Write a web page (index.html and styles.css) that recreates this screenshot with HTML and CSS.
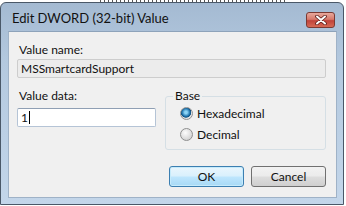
FILE: index.html
```html
<!DOCTYPE html>
<html lang="en">
  <head>
    <meta charset="UTF-8" />
    <title>Edit DWORD (32-bit) Value</title>
    <link rel="stylesheet" href="styles.css">
  </head>
  <body>
    <div class="backdrop"></div>
    <div class="window">
      <div class="titlebar">
        <span class="title">Edit DWORD (32-bit) Value</span>
        <span class="close">
          <svg width="12" height="10" viewBox="0 0 12 10">
            <path d="M2 1.5 L10 8.5 M10 1.5 L2 8.5" stroke="#5a1c18" stroke-width="3.6" stroke-linecap="round"/>
            <path d="M2 1.5 L10 8.5 M10 1.5 L2 8.5" stroke="#fff" stroke-width="2" stroke-linecap="round"/>
          </svg>
        </span>
      </div>
      <div class="client">
        <div class="field-label">Value name:</div>
        <div class="textbox readonly">MSSmartcardSupport</div>

        <div class="row">
          <div class="data-col">
            <div class="field-label">Value data:</div>
            <div class="textbox data">1<span class="caret"></span></div>
          </div>
          <fieldset class="base">
            <legend>Base</legend>
            <div class="radio-row">
              <span class="radio checked"></span>
              <span>Hexadecimal</span>
            </div>
            <div class="radio-row">
              <span class="radio"></span>
              <span>Decimal</span>
            </div>
          </fieldset>
        </div>

        <div class="buttons">
          <span class="btn default">OK</span>
          <span class="btn">Cancel</span>
        </div>
      </div>
    </div>
  </body>
</html>
```

FILE: styles.css
```css
/* --------------------
   Win7 style registry dialog
-------------------- */
body {
  margin: 0;
  width: 346px;
  height: 206px;
  overflow: hidden;
  background-color: #fff;
  font-family: Lato, "Noto Sans", "Liberation Sans", sans-serif;
  font-size: 12px;
  color: #111;
}

.backdrop {
  height: 2px;
  margin: 0 60px 0 100px;
  background: repeating-linear-gradient(90deg, #555 0 1px, transparent 1px 4px);
}

.window {
  width: 344px;
  height: 203px;
  box-sizing: border-box;
  border: 1px solid #4a5868;
  border-radius: 6px 6px 0 0;
  background: linear-gradient(#a4bad2, #b4c9df 30%, #c3d6ea);
  display: flex;
  flex-direction: column;
}

.titlebar {
  height: 28px;
  display: flex;
  align-items: center;
  padding: 0 8px 0 11px;
}

.title {
  font-size: 13px;
  line-height: 16px;
  margin-top: 2px;
}

.close {
  margin-left: auto;
  margin-top: 5px;
  width: 29px;
  height: 16px;
  box-sizing: border-box;
  border: 1px solid #7b3a33;
  border-radius: 3px;
  background: linear-gradient(#e8a89c, #d77a6c 45%, #c0433a 55%, #d66a55);
  display: flex;
  align-items: center;
  justify-content: center;
}

.client {
  flex: 1;
  margin: 0 6px 6px 7px;
  padding: 0 10px 0 8px;
  background-color: #f0f0f0;
  border: 1px solid #9fb2c7;
  border-top-color: #8ea3ba;
}

.field-label {
  margin-top: 10px;
  line-height: 16px;
  padding-left: 2px;
}

.textbox {
  height: 19px;
  box-sizing: border-box;
  margin-top: 1px;
  padding-left: 3px;
  line-height: 17px;
  border: 1px solid #dbdfe6;
  border-top-color: #abadb3;
  border-radius: 2px;
  background-color: #fff;
}

.textbox.readonly {
  background-color: #ececec;
  border-color: #cdcdcd;
}

.caret {
  display: inline-block;
  width: 1px;
  height: 13px;
  margin-left: 1px;
  vertical-align: -2px;
  background-color: #000;
}

.row {
  display: flex;
  justify-content: space-between;
  margin-top: 10px;
}

.data-col {
  width: 139px;
}

.data-col .field-label {
  margin-top: 0;
}

.textbox.data {
  margin-top: 4px;
  border-color: #b5c4d6;
  border-top-color: #8f9fb4;
}

.base {
  width: 161px;
  height: 62px;
  box-sizing: border-box;
  margin: 0;
  padding: 0 0 3px 0;
  border: 1px solid #d5dfe5;
  border-radius: 3px;
}

.base legend {
  margin-left: 7px;
  padding: 0 2px;
  line-height: 16px;
}

.radio-row {
  display: flex;
  align-items: center;
  height: 21px;
  padding-left: 14px;
}

.radio {
  width: 13px;
  height: 13px;
  box-sizing: border-box;
  margin-right: 4px;
  border: 1px solid #8e8f8f;
  border-radius: 50%;
  background: radial-gradient(circle at 40% 35%, #fdfdfd, #d6d6d6 70%, #cbcbcb);
}

.radio.checked {
  background: radial-gradient(circle at 45% 40%, #8ad3f5 0 15%, #1b6fa8 45%, #0e4e7e 55%, #e0e0e0 62%, #f6f6f6);
}

.radio-row:first-of-type {
  margin-top: -1px;
}

.buttons {
  display: flex;
  justify-content: flex-end;
  gap: 7px;
  margin-top: 16px;
}

.btn {
  width: 75px;
  height: 21px;
  box-sizing: border-box;
  border: 1px solid #707070;
  border-radius: 3px;
  background: linear-gradient(#f2f2f2, #ebebeb 48%, #dddddd 52%, #cfcfcf);
  text-align: center;
  line-height: 19px;
}

.btn.default {
  border-color: #3c7fb1;
  box-shadow: inset 0 0 0 1px #c6ebfb;
  background: linear-gradient(#eaf6fd, #d9f0fc 48%, #bee6fd 52%, #a7d9f5);
}
```
